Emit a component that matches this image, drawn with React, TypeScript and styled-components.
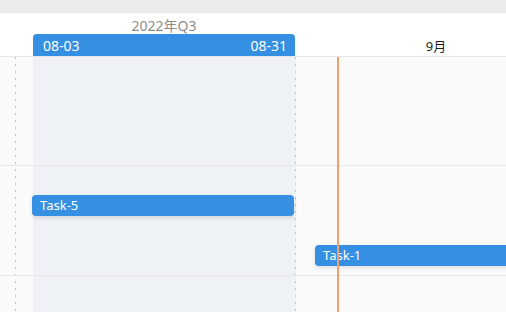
import React from "react";
import styled, { createGlobalStyle } from "styled-components";

const GlobalStyle = createGlobalStyle`
  html, body {
    margin: 0;
    padding: 0;
    background: #fafafa;
    font-family: "Noto Sans", "Noto Sans CJK SC", sans-serif;
  }
`;

const tasks = [
  { name: "Task-5", left: 32, width: 262, top: 138 },
  { name: "Task-1", left: 315, width: 200, top: 188 },
];

const App = () => {
  return (
    <Page>
      <GlobalStyle />
      <TopStrip />
      <Header>
        <Quarter>2022年Q3</Quarter>
        <RangeBar>
          <span>08-03</span>
          <span>08-31</span>
        </RangeBar>
        <Month>9月</Month>
      </Header>
      <Body>
        <Column $col={2} $dotLeft />
        <Column $col={3} $shade $dotRight />
        <RowLine $row={1} />
        <RowLine $row={2} />
        <TodayLine />
        {tasks.map((t) => (
          <TaskBar key={t.name} style={{ left: t.left, width: t.width, top: t.top }}>
            {t.name}
          </TaskBar>
        ))}
      </Body>
    </Page>
  );
};

export default App;

const Page = styled.div`
  width: 506px;
  height: 312px;
  overflow: hidden;
  display: flex;
  flex-direction: column;
`;

const TopStrip = styled.div`
  height: 13px;
  background: #ebebeb;
  flex-shrink: 0;
`;

const Header = styled.div`
  display: grid;
  grid-template-columns: 33px 262px 9px 264px;
  grid-template-rows: 21px 22px;
  height: 43px;
  background: #ffffff;
  border-bottom: 1px solid #e6e6e6;
  flex-shrink: 0;
`;

const Quarter = styled.div`
  grid-column: 2;
  grid-row: 1;
  align-self: end;
  text-align: center;
  font-size: 14px;
  line-height: 18px;
  color: #8c8c8c;
  margin-bottom: -1px;
`;

const RangeBar = styled.div`
  grid-column: 2;
  grid-row: 2;
  padding: 0 8px 0 10px;
  background: #3590e3;
  border-radius: 4px 4px 0 0;
  display: flex;
  justify-content: space-between;
  align-items: center;
  color: #ffffff;
  font-size: 14px;
`;

const Month = styled.div`
  grid-column: 4;
  grid-row: 2;
  align-self: center;
  text-align: center;
  font-size: 13px;
  color: #1f1f1f;
`;

const Body = styled.div`
  position: relative;
  flex: 1;
  display: grid;
  grid-template-columns: 15px 18px 262px 1fr;
  grid-template-rows: 109px 110px 1fr;
  background: #fafafa;
`;

const dots = `repeating-linear-gradient(to bottom, #c4c4c4 0, #c4c4c4 2px, transparent 2px, transparent 7px)`;

const Column = styled.div<{ $col: number; $shade?: boolean; $dotLeft?: boolean; $dotRight?: boolean }>`
  grid-column: ${(p) => p.$col};
  grid-row: 1 / -1;
  background-color: ${(p) => (p.$shade ? "#eef2f7" : "transparent")};
  background-image: ${(p) => (p.$dotLeft || p.$dotRight ? dots : "none")};
  background-size: 1px 100%;
  background-repeat: no-repeat;
  background-position: ${(p) => (p.$dotRight ? "right top" : "left top")};
  margin-right: ${(p) => (p.$dotRight ? "-1px" : "0")};
`;

const RowLine = styled.div<{ $row: number }>`
  grid-column: 1 / -1;
  grid-row: ${(p) => p.$row};
  align-self: end;
  height: 1px;
  background: #e8e8e8;
`;

const TodayLine = styled.div`
  position: absolute;
  left: 337px;
  width: 2px;
  top: 0;
  bottom: 0;
  background: #f59f6f;
  z-index: 3;
`;

const TaskBar = styled.div`
  position: absolute;
  height: 21px;
  box-sizing: border-box;
  padding-left: 8px;
  background: #3590e3;
  border-radius: 4px;
  box-shadow: 0 2px 4px rgba(0, 0, 0, 0.12);
  color: #ffffff;
  font-size: 13px;
  line-height: 21px;
  z-index: 2;
`;
